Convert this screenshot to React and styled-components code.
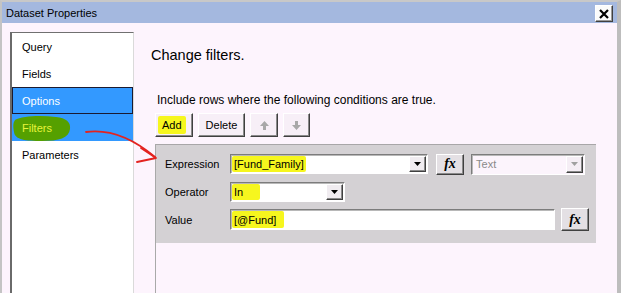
import React from "react";
import styled, { createGlobalStyle, css } from "styled-components";

const Global = createGlobalStyle`
  html, body { margin: 0; padding: 0; background: #fdf4fd; }
  body { font-family: "Liberation Sans", Arial, sans-serif; font-size: 11px; color: #000; }
  * { box-sizing: border-box; }
`;

const Window = styled.div`
  position: relative;
  width: 621px;
  height: 293px;
  overflow: hidden;
  background: #fdf4fd;
  border-top: 2px solid #c8c8c8;
  border-left: 2px solid #c4c4c4;
  border-right: 4px solid #bdbdbd;
`;

const TitleBar = styled.div`
  height: 21px;
  background: #a4b8df;
  display: flex;
  align-items: center;
  justify-content: space-between;
  padding: 0 4px 0 4px;
`;

const Title = styled.span`
  font-size: 11px;
  color: #000;
`;

const CloseButton = styled.div`
  width: 18px;
  height: 17px;
  margin-top: 2px;
  background: #fbfbfb;
  border: 1px solid;
  border-color: #ffffff #404040 #404040 #ffffff;
  box-shadow: inset -1px -1px #9a9a9a;
  display: flex;
  align-items: center;
  justify-content: center;
`;

const Body = styled.div`
  display: flex;
  padding: 9px 0 0 8px;
`;

const NavList = styled.ul`
  list-style: none;
  margin: 0;
  padding: 0;
  width: 124px;
  height: 300px;
  flex: none;
  background: #fff;
  border: 1px solid;
  border-width: 1px 1px 0 2px;
  border-color: #707070 #dadada #dadada #6a6a6a;
`;

const NavItem = styled.li`
  position: relative;
  height: 27px;
  display: flex;
  align-items: center;
  padding-left: 10px;
  ${(p) =>
    p.$selected &&
    css`
      background: #3399ff;
      color: #fff;
    `}
  ${(p) =>
    p.$focused &&
    css`
      outline: 1px solid #1a1a30;
      outline-offset: -1px;
    `}
`;

const NavLabel = styled.span`
  position: relative;
  z-index: 1;
  color: ${(p) => p.$color || "inherit"};
`;

const Blob = styled.svg`
  position: absolute;
  left: 0;
  top: 1px;
  width: 60px;
  height: 27px;
  z-index: 0;
`;

const Main = styled.div`
  flex: 1;
  padding: 15px 0 0 17px;
`;

const Heading = styled.div`
  font-size: 14.5px;
  line-height: 17px;
  height: 17px;
`;

const Section = styled.div`
  margin: 30px 0 0 4px;
`;

const Hint = styled.div`
  font-size: 12px;
  line-height: 13px;
  padding-left: 2px;
`;

const Toolbar = styled.div`
  display: flex;
  gap: 5px;
  margin-top: 6px;
`;

const raised = css`
  border: 1px solid;
  border-color: #ffffff #404040 #404040 #ffffff;
  box-shadow: inset -1px -1px #8a8a8a;
`;

const ToolButton = styled.div`
  ${raised};
  width: ${(p) => p.$w}px;
  height: 24px;
  background: #f7eff7;
  display: flex;
  align-items: center;
  justify-content: center;
  padding: 2px;
`;

const Marker = styled.span`
  background: #f6f61e;
  border-radius: 2px;
  align-self: stretch;
  display: flex;
  align-items: center;
  padding: 0 ${(p) => p.$pad ?? 3}px;
  margin-right: auto;
`;

const Frame = styled.div`
  margin-top: 7px;
  width: 441px;
  height: 160px;
  border-left: 1px solid #a9a9a9;
`;

const Panel = styled.div`
  background: #d4d1d4;
  border-top: 1px solid #a8a6a8;
  height: 99px;
  padding: 9px 0 0 9px;
  display: flex;
  flex-direction: column;
  gap: 8px;
`;

const FieldRow = styled.div`
  display: flex;
  align-items: center;
  height: ${(p) => p.$h || 20}px;
  margin-top: ${(p) => p.$mt || 0}px;
`;

const Label = styled.div`
  width: 65px;
  flex: none;
`;

const sunken = css`
  border: 1px solid;
  border-color: #7c7c7c #ffffff #ffffff #7c7c7c;
  box-shadow: inset 1px 1px #b8b8b8;
`;

const Combo = styled.div`
  ${sunken};
  width: ${(p) => p.$w}px;
  height: ${(p) => p.$h || 20}px;
  background: ${(p) => (p.$disabled ? "#fcf4fc" : "#ffffff")};
  color: ${(p) => (p.$disabled ? "#8a8a8a" : "#000")};
  display: flex;
  align-items: stretch;
  padding: 1px;
  margin-right: ${(p) => p.$mr || 0}px;
`;

const ComboText = styled.span`
  flex: 1;
  display: flex;
  align-items: center;
`;

const DropButton = styled.div`
  ${raised};
  width: 17px;
  flex: none;
  background: ${(p) => (p.$disabled ? "#f5eef5" : "#f0ecf0")};
  display: flex;
  align-items: center;
  justify-content: center;
`;

const FxButton = styled.div`
  ${raised};
  width: 28px;
  height: ${(p) => p.$h || 21}px;
  background: #e4e0e4;
  display: flex;
  align-items: center;
  justify-content: center;
  font-family: "Liberation Serif", "Times New Roman", serif;
  font-style: italic;
  font-weight: bold;
  font-size: 14px;
  margin-right: ${(p) => p.$mr || 0}px;
`;

const Overlay = styled.svg`
  position: absolute;
  left: -2px;
  top: -2px;
  width: 621px;
  height: 293px;
  pointer-events: none;
`;

const Triangle = ({ color = "#000" }) => (
  <svg width="7" height="4" viewBox="0 0 7 4">
    <path d="M0 0 H7 L3.5 4 Z" fill={color} />
  </svg>
);

const Arrow = ({ down }) => (
  <svg width="9" height="9" viewBox="0 0 9 9">
    <path
      d={down ? "M3 0 H6 V4 H9 L4.5 9 L0 4 H3 Z" : "M4.5 0 L9 5 H6 V9 H3 V5 H0 Z"}
      fill="#a8a8a8"
    />
  </svg>
);

export default function App() {
  return (
    <>
      <Global />
      <Window>
        <TitleBar>
          <Title>Dataset Properties</Title>
          <CloseButton>
            <svg width="10" height="10" viewBox="0 0 10 10">
              <path d="M1 1 L9 9 M9 1 L1 9" stroke="#000" strokeWidth="2.2" />
            </svg>
          </CloseButton>
        </TitleBar>
        <Body>
          <NavList>
            <NavItem>Query</NavItem>
            <NavItem>Fields</NavItem>
            <NavItem $selected $focused>
              Options
            </NavItem>
            <NavItem $selected>
              <Blob viewBox="0 0 60 27">
                <path
                  d="M3 5 C10 1 28 0 44 2 C54 3 59 7 58 14 C57 23 47 26 30 26 C14 26 3 25 2 17 C1 11 1 8 3 5 Z"
                  fill="#55a000"
                />
              </Blob>
              <NavLabel $color="#e8f43c">Filters</NavLabel>
            </NavItem>
            <NavItem>Parameters</NavItem>
          </NavList>
          <Main>
            <Heading>Change filters.</Heading>
            <Section>
              <Hint>Include rows where the following conditions are true.</Hint>
              <Toolbar>
                <ToolButton $w={38}>
                  <Marker $pad={4}>Add</Marker>
                </ToolButton>
                <ToolButton $w={47}>Delete</ToolButton>
                <ToolButton $w={28}>
                  <Arrow />
                </ToolButton>
                <ToolButton $w={27}>
                  <Arrow down />
                </ToolButton>
              </Toolbar>
              <Frame>
                <Panel>
                  <FieldRow>
                    <Label>Expression</Label>
                    <Combo $w={198} $mr={8}>
                      <ComboText>
                        <Marker $pad={2}>[Fund_Family]</Marker>
                      </ComboText>
                      <DropButton>
                        <Triangle />
                      </DropButton>
                    </Combo>
                    <FxButton $mr={7}>fx</FxButton>
                    <Combo $w={114} $h={21} $disabled>
                      <ComboText>&nbsp;Text</ComboText>
                      <DropButton $disabled>
                        <Triangle color="#a0a0a0" />
                      </DropButton>
                    </Combo>
                  </FieldRow>
                  <FieldRow>
                    <Label>Operator</Label>
                    <Combo $w={115}>
                      <ComboText>
                        <Marker $pad={2}>In&nbsp;&nbsp;&nbsp;&nbsp;&nbsp;</Marker>
                      </ComboText>
                      <DropButton>
                        <Triangle />
                      </DropButton>
                    </Combo>
                  </FieldRow>
                  <FieldRow $h={23} $mt={-2}>
                    <Label>Value</Label>
                    <Combo $w={325} $h={21} $mr={6}>
                      <ComboText>
                        <Marker $pad={2}>[@Fund]&nbsp;&nbsp;</Marker>
                      </ComboText>
                    </Combo>
                    <FxButton $h={23}>fx</FxButton>
                  </FieldRow>
                </Panel>
              </Frame>
            </Section>
          </Main>
        </Body>
        <Overlay viewBox="0 0 621 293">
          <path
            d="M86 132 C108 129 130 136 155 157"
            fill="none"
            stroke="#e3231f"
            strokeWidth="1.8"
            strokeLinecap="round"
          />
          <path
            d="M141 148 L156 158 L137 162"
            fill="none"
            stroke="#e3231f"
            strokeWidth="1.8"
            strokeLinecap="round"
            strokeLinejoin="round"
          />
        </Overlay>
      </Window>
    </>
  );
}
